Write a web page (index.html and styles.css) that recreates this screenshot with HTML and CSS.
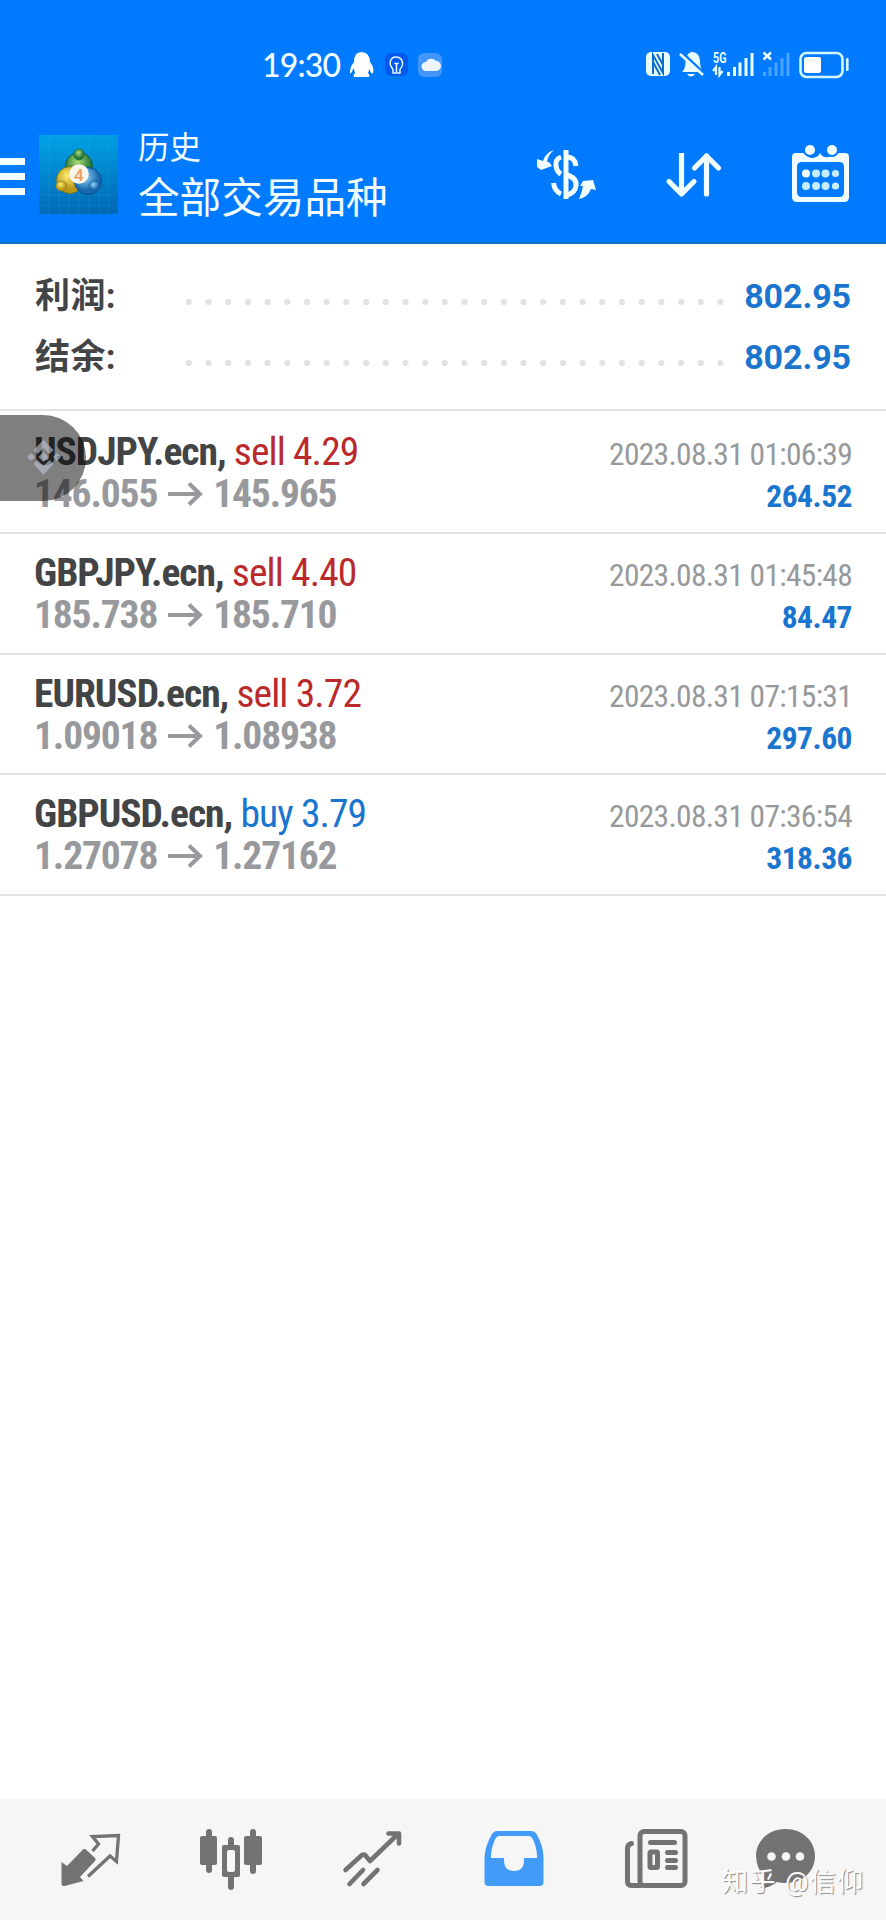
FILE: index.html
```html
<!DOCTYPE html>
<html lang="zh-CN">
<head>
<meta charset="utf-8">
<title>历史</title>
<link rel="stylesheet" href="styles.css">
</head>
<body>
<div class="screen">
  <header class="header">
    <div class="status">
      <span class="clock">19:30</span>
      <svg class="status-left" width="96" height="40" viewBox="350 45 96 40">
        <path fill="#fff" d="M353.500 68Q351 75 350 73Q349.500 67 354 62Q354 52 361.500 52Q369.500 52 370 62Q374.500 67 373 73Q371.500 75 369.500 69L368 73Q370 75 369 77H354Q353 75 355 73Z"/>
        <rect x="385" y="53" width="23" height="23" rx="6" fill="#0358ee"/>
        <path d="M393 69C388 64 390 57 396 57s9 7 4 12M393 69v4h7v-4M396.500 72v-8l-2-1m2 1l2-1" fill="none" stroke="#e5faff" stroke-width="1.500"/>
        <rect x="418" y="53" width="24" height="24" rx="6" fill="#4397fa"/>
        <path d="M426 71a4.500 4.500 0 0 1 0-9a6 6 0 0 1 10-1a5 5 0 0 1 0 10z" fill="#eef7ff"/>
      </svg>
      <svg class="status-right" width="210" height="40" viewBox="643 45 210 40">
        <rect x="646" y="52" width="24" height="24" rx="5" fill="#e9fdff"/>
        <path d="M653 74V55l10 18V53M657 54l6 11M653 62l7 13" fill="none" stroke="#0b6fd0" stroke-width="2"/>
        <path d="M682 72q4-4 3.500-11q1-8 6-9q8 0 8.500 9q0 7 3 11z" fill="#e9fdff"/>
        <path d="M687 74h8q-4 5-8 0z" fill="#e9fdff"/>
        <path d="M682.500 53l22 21" stroke="#007aff" stroke-width="3"/>
        <path d="M680 54l23 21" stroke="#e9fdff" stroke-width="2.600"/>
        <text class="net" x="713" y="62.500" textLength="13.500" lengthAdjust="spacingAndGlyphs">5G</text>
        <path d="M713 71l3-4v8M719.500 67v8l3-4" stroke="#e9fdff" stroke-width="2.200" fill="none"/>
        <path d="M728.500 76v-4M734.500 76v-9M740 76V62.500M746 76V58M752 76V53" stroke="#e9fdff" stroke-width="3"/>
        <path d="M763.500 52.500l7.500 7m0-7l-7.500 7" stroke="#e9fdff" stroke-width="2.600"/>
        <path d="M764.500 76v-4M770 76v-9M776 76V62.500M782 76V58M788 76V53" stroke="#49a5ff" stroke-width="3"/>
        <rect x="800.500" y="53" width="42" height="24" rx="6" fill="none" stroke="#d5f6ff" stroke-width="2.600"/>
        <rect x="804" y="57" width="17" height="16" rx="2" fill="#fff"/>
        <rect x="846" y="58" width="2.600" height="13" rx="1" fill="#d5f6ff"/>
      </svg>
    </div>
    <div class="toolbar">
      <div class="menu"><i></i><i></i><i></i></div>
      <svg class="logo" width="79" height="79" viewBox="0 0 79 79">
        <defs>
          <linearGradient id="bg" x1=".5" y1="0" x2=".6" y2="1"><stop offset="0" stop-color="#00a0e4"/><stop offset="1" stop-color="#0268b4"/></linearGradient>
          <radialGradient id="gr" cx=".45" cy=".35"><stop offset="0" stop-color="#a9dc74"/><stop offset="1" stop-color="#23763a"/></radialGradient>
          <radialGradient id="ye" cx=".4" cy=".35"><stop offset="0" stop-color="#ffec70"/><stop offset="1" stop-color="#b99719"/></radialGradient>
          <radialGradient id="bl" cx=".4" cy=".35"><stop offset="0" stop-color="#8fd1f7"/><stop offset="1" stop-color="#1767ad"/></radialGradient>
        </defs>
        <rect width="79" height="79" fill="url(#bg)"/>
        <path d="M10 0v79M20 0v79M30 0v79M40 0v79M50 0v79M60 0v79M70 0v79M0 12h79M0 24h79M0 36h79M0 48h79M0 60h79M0 71h79" stroke="#58c7ef" stroke-opacity=".12"/>
        <circle cx="40" cy="31" r="13.500" fill="url(#gr)" stroke="#175f43"/>
        <circle cx="31" cy="45" r="13.500" fill="url(#ye)" stroke="#6e762d"/>
        <circle cx="49" cy="46" r="13.500" fill="url(#bl)" stroke="#0a4f8c"/>
        <ellipse cx="40" cy="19.500" rx="5" ry="5.500" fill="url(#gr)" stroke="#236c35" stroke-width=".7"/>
        <ellipse cx="22.500" cy="51" rx="5.500" ry="5" fill="url(#ye)" stroke="#8d7920" stroke-width=".7"/>
        <ellipse cx="55.500" cy="51" rx="5.500" ry="5" fill="url(#bl)" stroke="#145b98" stroke-width=".7"/>
        <circle cx="40" cy="39" r="9.800" fill="#f8f6ed"/>
        <text class="four" x="35" y="45.500">4</text>
      </svg>
      <div class="titles">
        <div class="title-small">历史</div>
        <div class="title-big">全部交易品种</div>
      </div>
      <svg class="actions" width="350" height="100" viewBox="520 125 350 100">
        <g fill="none" stroke="#f2feff" stroke-width="5">
          <path d="M561 157q-6 2-5 9q1 6 5 8M567 157q8 0 9 9M567 175q10 3 9 11q-1 7-9 9M553.500 183q1 8 7.500 11"/>
          <path d="M566 150v49"/>
        </g>
        <path d="M554 150q-9 3-11 11l-6-2v8l4 3l11-4l-3-4h-2q1-7 7-12z" fill="#f2feff"/>
        <path d="M579 199q3-7 4-13h-3l3-5l10-1l3 10l-5-1q-3 8-12 10z" fill="#f2feff"/>
        <g fill="none" stroke="#f2feff" stroke-width="5.200" stroke-linejoin="round">
          <path d="M681.500 153v42"/><path d="M669 181.500l12.500 12.500l12.500-12.500" stroke-linecap="round"/>
          <path d="M706.500 156v38" stroke-linecap="round"/><path d="M694.500 168l12-12l12 12" stroke-linecap="round"/>
        </g>
        <path fill="#f2feff" fill-rule="evenodd" d="M796 153h9a8 8 0 0 0 11 4q3-1 4-4a8 8 0 0 0 9 4q4-1 7-4h9q4 0 4 4v40q0 5-5 5h-47q-5 0-5-5v-40q0-4 4-4zM802 162q-5 0-5 5v25q0 5 5 5h37q5 0 5-5v-25q0-5-5-5z"/>
        <circle cx="810" cy="150" r="7" fill="#007aff"/><circle cx="832" cy="150" r="7" fill="#007aff"/>
        <circle cx="810" cy="150" r="5" fill="#f2feff"/><circle cx="832" cy="150" r="5" fill="#f2feff"/>
        <g fill="#c5edff"><circle cx="806" cy="173.500" r="4" fill="#f2feff"/><circle cx="816" cy="173.500" r="4"/><circle cx="825.500" cy="173.500" r="4"/><circle cx="835.500" cy="173.500" r="3.600"/><circle cx="806" cy="186" r="4"/><circle cx="816" cy="186" r="4"/><circle cx="825.500" cy="186" r="4"/><circle cx="835.500" cy="186" r="3.600"/></g>
      </svg>
    </div>
  </header>

  <section class="summary">
    <div class="sum-row"><span class="sum-label">利润:</span><span class="dots"></span><b class="sum-value">802.95</b></div>
    <div class="sum-row"><span class="sum-label">结余:</span><span class="dots"></span><b class="sum-value">802.95</b></div>
  </section>

  <main class="deals">
    <article class="deal first">
      <div class="line"><span class="what"><b class="symbol">USDJPY.ecn,</b> <span class="sell">sell 4.29</span></span><span class="date">2023.08.31 01:06:39</span></div>
      <div class="line"><span class="prices"><span>146.055</span><svg width="36" height="24" viewBox="0 0 36 24"><path d="M0 12h32M21 1.500L32 12L21 22.500"/></svg><span>145.965</span></span><span class="amount">264.52</span></div>
    </article>
    <article class="deal">
      <div class="line"><span class="what"><b class="symbol">GBPJPY.ecn,</b> <span class="sell">sell 4.40</span></span><span class="date">2023.08.31 01:45:48</span></div>
      <div class="line"><span class="prices"><span>185.738</span><svg width="36" height="24" viewBox="0 0 36 24"><path d="M0 12h32M21 1.500L32 12L21 22.500"/></svg><span>185.710</span></span><span class="amount">84.47</span></div>
    </article>
    <article class="deal short">
      <div class="line"><span class="what"><b class="symbol">EURUSD.ecn,</b> <span class="sell">sell 3.72</span></span><span class="date">2023.08.31 07:15:31</span></div>
      <div class="line"><span class="prices"><span>1.09018</span><svg width="36" height="24" viewBox="0 0 36 24"><path d="M0 12h32M21 1.500L32 12L21 22.500"/></svg><span>1.08938</span></span><span class="amount">297.60</span></div>
    </article>
    <article class="deal">
      <div class="line"><span class="what"><b class="symbol">GBPUSD.ecn,</b> <span class="buy">buy 3.79</span></span><span class="date">2023.08.31 07:36:54</span></div>
      <div class="line"><span class="prices"><span>1.27078</span><svg width="36" height="24" viewBox="0 0 36 24"><path d="M0 12h32M21 1.500L32 12L21 22.500"/></svg><span>1.27162</span></span><span class="amount">318.36</span></div>
    </article>
  </main>

  <div class="bubble">
    <svg width="34" height="36" viewBox="27 439 34 36" fill="#bcc3d2" fill-opacity=".62">
      <path d="M43.500 440l10 10-4 4-6-6-6 6-4-4zM43.500 475l10-11-4-4-6 6-6-6-4 4zM43.500 452l5 5-5 5-5-5zM31 453l4 4-4 4-4-4zM57 453l4 4-4 4-4-4z"/>
    </svg>
  </div>

  <nav class="nav">
    <svg viewBox="19 1799 142 121">
      <path d="M61.500 1862l5.500 4L82 1850.500q2-2.500 4.500-.5l8.500 8q1.500 1.500 0 3L80 1877l3.500 4-19 5q-3 .5-3-2z" fill="#737373"/>
      <path d="M92.500 1851l6-7-6-7.500 26-1-2 26-6.500-5.500-22 20.500" fill="none" stroke="#737373" stroke-width="3.300"/>
    </svg>
    <svg viewBox="161 1799 142 121" fill="#737373">
      <rect x="200" y="1836" width="17" height="29" rx="2"/><rect x="206" y="1829" width="6" height="44" rx="3"/>
      <rect x="244" y="1836" width="18" height="29" rx="2"/><rect x="250" y="1829" width="6" height="45" rx="3"/>
      <rect x="222" y="1845" width="18" height="32" rx="2"/><rect x="228" y="1837" width="6" height="53" rx="3"/>
      <rect x="227" y="1850" width="8" height="22" rx="2" fill="#f6f6f6"/>
    </svg>
    <svg viewBox="303 1799 142 121" fill="none" stroke="#737373" stroke-width="4.600" stroke-linecap="round" stroke-linejoin="round">
      <path d="M345.500 1870L362 1855q1.500-1 3 0l5 6L398 1834M388.500 1833.500h10.500v10M349.500 1884L363 1870M363.500 1884L377.500 1870"/>
    </svg>
    <svg viewBox="445 1799 142 121" fill="#429bf8">
      <path fill-rule="evenodd" d="M497 1831h34q4 0 6 4q6 10 6.500 22v25q0 4-4 4h-51q-4 0-4-4v-25q1-12 7-22q2-4 5.500-4zM499 1836q-3 0-5 6q-3 7-3 16h13v2q0 11 10 11t10-11v-2h13q0-9-3-16q-2-6-5-6z"/>
    </svg>
    <svg viewBox="587 1799 142 121" fill="none" stroke="#737373" stroke-width="5" stroke-linecap="round">
      <rect x="640" y="1831.500" width="45" height="54" rx="4"/>
      <path d="M631.500 1843.500q-4 1-4 5v33q0 4 4 4h9M650.500 1842.500h24M667.500 1852.500h8M667.500 1860.500h8M667.500 1867.500h8"/>
      <rect x="650" y="1852" width="7.500" height="15.500" rx="1"/>
    </svg>
    <svg viewBox="729 1799 142 121" fill="#737373">
      <path d="M785.500 1829c17 0 29.500 12 29.500 27s-12 27-29.500 27q-5 0-9-1q-6 6-16 6q5-5 3-12q-7-8-7.500-20c0-15 12.500-27 29.500-27z"/>
      <circle cx="771.500" cy="1856.500" r="4.300" fill="#f6f6f6"/><circle cx="786" cy="1856.500" r="4.300" fill="#f6f6f6"/><circle cx="800" cy="1856.500" r="4.300" fill="#f6f6f6"/>
    </svg>
  </nav>
  <div class="watermark">知乎 @信仰</div>
</div>
</body>
</html>
```
FILE: styles.css
```css
* { box-sizing: border-box; }
body { margin: 0; }
.screen {
  position: relative;
  width: 886px;
  height: 1920px;
  display: flex;
  flex-direction: column;
  background: #fff;
  overflow: hidden;
  font-family: Roboto, "Noto Sans CJK SC", sans-serif;
}
.header {
  height: 244px;
  background: #007aff;
  border-bottom: 2px solid #1770c9;
  color: #f2feff;
}
.status {
  height: 125px;
  padding: 45px 33px 0 262px;
  display: flex;
}
.clock {
  width: 88px;
  font: 500 32px/40px Lato, sans-serif;
  letter-spacing: -.8px;
}
.status-right { margin-left: auto; }
.net { font: 700 14px Roboto, sans-serif; fill: #e9fdff; }
.four { font: 500 17px Roboto, sans-serif; fill: #f09a5c; }
.toolbar { display: flex; height: 100px; }
.menu {
  width: 25px;
  margin-right: 14px;
  padding-top: 33px;
  display: flex;
  flex-direction: column;
  gap: 8px;
}
.menu i { height: 7px; background: #f2feff; }
.logo { margin-top: 10px; }
.titles { margin-left: 20px; width: 382px; }
.title-small { font-size: 31.500px; line-height: 40px; margin-top: 4px; }
.title-big { font-size: 41.600px; line-height: 52px; margin-top: 4px; }
.summary {
  height: 167px;
  padding: 22px 35px 0;
  border-bottom: 2px solid #e3e3e3;
}
.sum-row { display: flex; height: 61px; line-height: 60px; }
.sum-label { width: 144px; padding-top: 1px; font-size: 35px; letter-spacing: .4px; font-weight: 700; color: #434446; }
.dots {
  width: 552px;
  height: 72px;
  background: radial-gradient(circle, #e2e2e4 2.800px, transparent 3.500px) 0 0 / 19.700px 72px repeat-x;
}
.sum-value { margin-left: auto; font-size: 34px; color: #1a75cf; letter-spacing: -.1px; }
.deal {
  height: 121px;
  padding: 18px 34px 0 34px;
  border-bottom: 2px solid #e3e3e3;
  font-family: "Roboto Condensed", Roboto, sans-serif;
  font-stretch: 75%;
}
.first { height: 123px; padding-top: 20px; }
.short { height: 120px; }
.line { display: flex; justify-content: space-between; align-items: baseline; height: 42px; line-height: 42px; }
.what { font-size: 39.500px; letter-spacing: -.9px; }
.symbol { color: #434446; letter-spacing: -1px; }
.sell { color: #ba2a2c; }
.buy { color: #1a75cf; }
.date { font-size: 31.500px; letter-spacing: -.7px; color: #98999b; }
.prices { display: flex; font-size: 39.500px; letter-spacing: -1.150px; font-weight: 700; color: #98999c; }
.prices svg { margin: 9px 9px 0 11px; fill: none; stroke: #98999c; stroke-width: 4; }
.amount { font-size: 31.500px; letter-spacing: -.5px; font-weight: 700; color: #1a75cf; }
.bubble {
  position: absolute;
  left: 0;
  top: 415px;
  width: 86px;
  height: 86px;
  padding: 24px 0 0 27px;
  border-radius: 0 43px 43px 0;
  background: rgba(0, 0, 0, .5);
}
.nav {
  margin-top: auto;
  height: 121px;
  padding-left: 19px;
  display: flex;
  background: #f6f6f6;
}
.nav svg { width: 142px; height: 121px; }
.watermark {
  position: absolute;
  left: 722px;
  top: 1862px;
  font-size: 26px;
  letter-spacing: 1.500px;
  line-height: 40px;
  white-space: nowrap;
  color: #fff;
  text-shadow: 1px 1px 1px #888;
}
```
